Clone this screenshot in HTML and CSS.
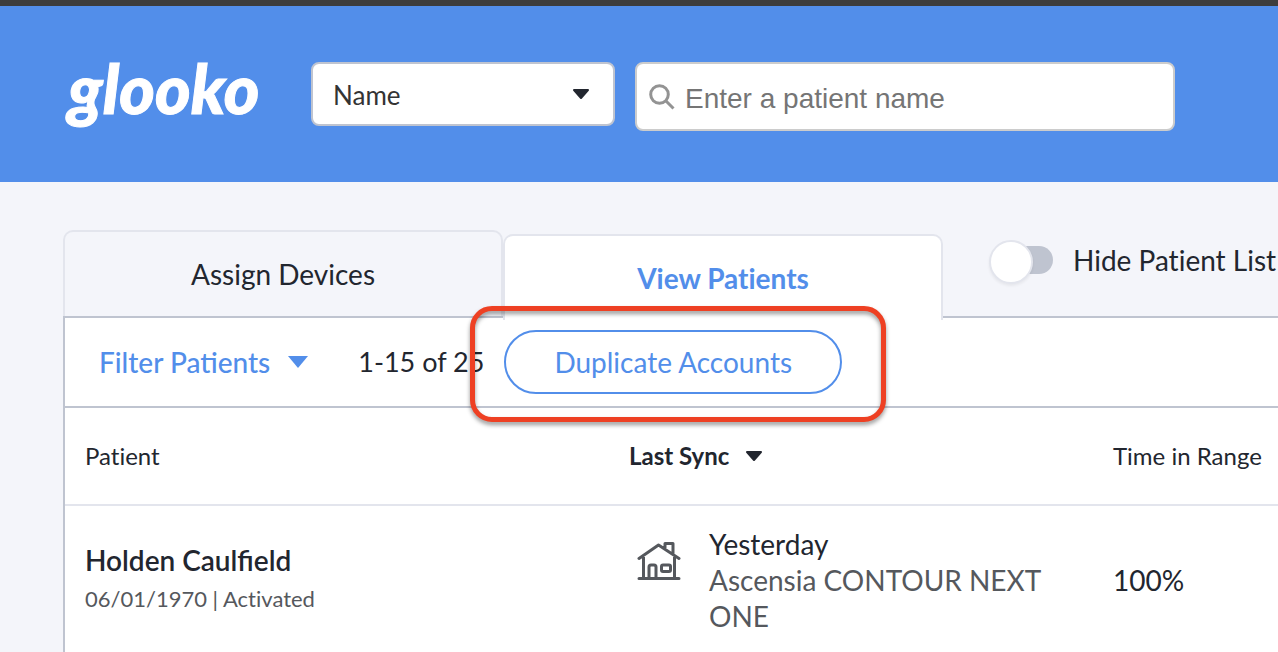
FILE: index.html
```html
<!DOCTYPE html>
<html lang="en">
<head>
  <meta charset="UTF-8">
  <meta name="viewport" content="width=device-width, initial-scale=1">
  <title>Glooko - View Patients</title>
  <link rel="stylesheet" href="styles.css">
</head>
<body>
  <header class="header">
    <a href="#" class="logo">glooko</a>
    <form class="search">
      <div class="select-wrap">
        <select class="search-type" aria-label="Search by">
          <option>Name</option>
        </select>
        <svg class="select-arrow" width="18" height="12" viewBox="0 0 18 12"><path d="M2 2h14L9 10z"/></svg>
      </div>
      <div class="input-wrap">
        <svg class="search-icon" width="26" height="26" viewBox="0 0 26 26"><circle cx="10.5" cy="10.5" r="8.8"/><path d="M17 17l7.5 7.5"/></svg>
        <input type="text" class="search-input" placeholder="Enter a patient name" aria-label="Patient name">
      </div>
    </form>
  </header>

  <main class="content">
    <div class="tab-row">
      <button type="button" class="tab">Assign Devices</button>
      <button type="button" class="tab active">View Patients</button>
      <label class="toggle"><input type="checkbox" class="switch">Hide Patient List</label>
    </div>

    <section class="panel">
      <div class="toolbar">
        <button type="button" class="filter">
          Filter Patients
          <svg width="20" height="12" viewBox="0 0 20 12"><path d="M0 0h20L10 12z"/></svg>
        </button>
        <span class="count">1-15 of 25</span>
        <div class="highlight">
          <button type="button" class="duplicate">Duplicate Accounts</button>
        </div>
      </div>

      <table class="patients">
        <colgroup>
          <col class="col-patient">
          <col class="col-sync">
          <col>
        </colgroup>
        <thead>
          <tr>
            <th>Patient</th>
            <th class="sorted">Last Sync <svg class="sort-arrow" width="18" height="12" viewBox="0 0 18 12"><path d="M2 2h14L9 10z"/></svg></th>
            <th>Time in Range</th>
          </tr>
        </thead>
        <tbody>
          <tr>
            <td>
              <div class="name">Holden Caulfield</div>
              <div class="details">06/01/1970 | Activated</div>
            </td>
            <td>
              <div class="sync">
                <svg class="home" width="44" height="40" viewBox="0 0 44 40">
                  <path d="M2 37.5h40M6.5 16v21M37.5 16v21M2 17.5L21.5 4 42 17.5M28 8V2.500h8V13M12 37V26q0-2 2-2h3q2 0 2 2v11"/>
                  <rect x="24.500" y="24" width="9" height="6.500" rx="1.500"/>
                </svg>
                <div class="sync-text">
                  <div>Yesterday</div>
                  <div class="device">Ascensia CONTOUR NEXT ONE</div>
                </div>
              </div>
            </td>
            <td>100%</td>
          </tr>
        </tbody>
      </table>
    </section>
  </main>
</body>
</html>
```
FILE: styles.css
```css
:root {
  --blue: #528eea;
  --text: #22262f;
  --muted: #55585d;
  --line: #bfc4d0;
  --line-light: #e3e5ed;
  --bg: #f4f5fa;
}
*, *::before, *::after {
  box-sizing: border-box;
  margin: 0;
  padding: 0;
}
body {
  font-family: Lato, sans-serif;
  font-size: 28px;
  line-height: 36px;
  color: var(--text);
  background: var(--bg);
}
button, select {
  font: inherit;
  color: inherit;
  cursor: pointer;
}

/* header */
.header {
  display: flex;
  align-items: flex-start;
  height: 182px;
  padding: 56px 64px 0 68px;
  border-top: 6px solid #3d3d3d;
  background: var(--blue);
}
.logo {
  width: 243px;
  font-size: 68px;
  line-height: 52px;
  font-weight: 900;
  font-style: italic;
  color: #fff;
  text-decoration: none;
  -webkit-text-stroke: 1px #fff;
}
.search {
  display: flex;
  align-items: flex-start;
  gap: 20px;
}
.select-wrap, .input-wrap {
  position: relative;
}
.search-type {
  display: block;
  width: 304px;
  height: 64px;
  padding: 2px 20px 0;
  font-size: 26px;
  color: #333;
  background: #fff;
  border: 2px solid var(--line);
  border-radius: 8px;
  appearance: none;
}
.select-arrow {
  position: absolute;
  right: 25px;
  top: 26px;
  pointer-events: none;
}
.select-arrow, .sort-arrow {
  fill: var(--text);
  stroke: var(--text);
  stroke-width: 2;
  stroke-linejoin: round;
}
.search-input {
  display: block;
  width: 540px;
  height: 69px;
  padding: 4px 16px 0 48px;
  font-family: "Liberation Sans", Arial, sans-serif;
  font-size: 28px;
  background: #fff;
  border: 2px solid #ccc;
  border-radius: 8px;
}
.search-input::placeholder {
  color: #757575;
}
.search-icon {
  position: absolute;
  left: 14px;
  top: 22px;
  fill: none;
  stroke: #939393;
  stroke-width: 3;
}

/* tabs */
.content {
  padding: 48px 0 0 63px;
}
.tab-row {
  display: flex;
  align-items: flex-start;
  font-variant-ligatures: none;
}
.tab {
  width: 440px;
  height: 86px;
  background: var(--bg);
  border: 2px solid var(--line-light);
  border-bottom: 0;
  border-radius: 10px 10px 0 0;
  font-variant-ligatures: none;
}
.tab.active {
  position: relative;
  margin: 4px 0 -4px;
  font-weight: 700;
  color: var(--blue);
  background: #fff;
}
.toggle {
  display: flex;
  align-items: center;
  gap: 20px;
  margin-left: 46px;
  padding-top: 12px;
  white-space: nowrap;
}
.switch {
  position: relative;
  width: 64px;
  height: 28px;
  border-radius: 14px;
  background: linear-gradient(90deg, transparent 50%, var(--line) 50%);
  appearance: none;
}
.switch::before {
  content: "";
  position: absolute;
  left: 0;
  top: -6px;
  width: 44px;
  height: 44px;
  border: 2px solid var(--line-light);
  border-radius: 50%;
  background: #fff;
  box-shadow: 0 2px 3px rgba(0,0,0,0.06);
}
.switch:checked {
  background: var(--blue);
}
.switch:checked::before {
  left: 20px;
}

/* patient list */
.panel {
  padding-bottom: 4px;
  background: #fff;
  border-top: 2px solid var(--line);
  border-left: 2px solid var(--line);
}
.toolbar {
  display: flex;
  align-items: center;
  height: 90px;
  padding-left: 34px;
  border-bottom: 2px solid var(--line);
}
.filter {
  display: flex;
  align-items: center;
  gap: 18px;
  font-weight: 500;
  color: var(--blue);
  background: none;
  border: 0;
}
.filter svg {
  fill: var(--blue);
}
.count {
  margin: 0 20px 0 50px;
  font-size: 27px;
}
.highlight {
  position: relative;
}
.highlight::after {
  content: "";
  position: absolute;
  inset: -24px -44px -28px -34px;
  border: 5px solid #ee4023;
  border-radius: 22px;
  filter: drop-shadow(0 3px 2px rgba(0,0,0,0.4));
  pointer-events: none;
}
.duplicate {
  display: block;
  height: 64px;
  padding: 0 48px;
  color: var(--blue);
  background: #fff;
  border: 2px solid var(--blue);
  border-radius: 32px;
}
.patients {
  width: 100%;
  table-layout: fixed;
  border-collapse: collapse;
}
.col-patient {
  width: 544px;
}
.col-sync {
  width: 484px;
}
.patients th {
  height: 97px;
  padding: 0 0 0 20px;
  font-size: 24px;
  font-weight: 400;
  text-align: left;
  white-space: nowrap;
  font-variant-ligatures: none;
  border-bottom: 2px solid var(--line-light);
}
.patients th.sorted {
  font-weight: 700;
}
.sort-arrow {
  margin: 0 0 3px 10px;
}
.patients td {
  padding: 20px 0 17px 20px;
}
.name {
  font-weight: 600;
}
.details {
  padding: 3px 0 1px;
  font-size: 22px;
  font-variant-ligatures: none;
  color: var(--muted);
}
.sync {
  display: flex;
  align-items: flex-start;
  gap: 28px;
  padding: 0 40px 0 8px;
}
.home {
  flex: none;
  margin-top: 15px;
  fill: none;
  stroke: var(--muted);
  stroke-width: 3;
  stroke-linecap: round;
  stroke-linejoin: round;
}
.device {
  color: var(--muted);
}
```
